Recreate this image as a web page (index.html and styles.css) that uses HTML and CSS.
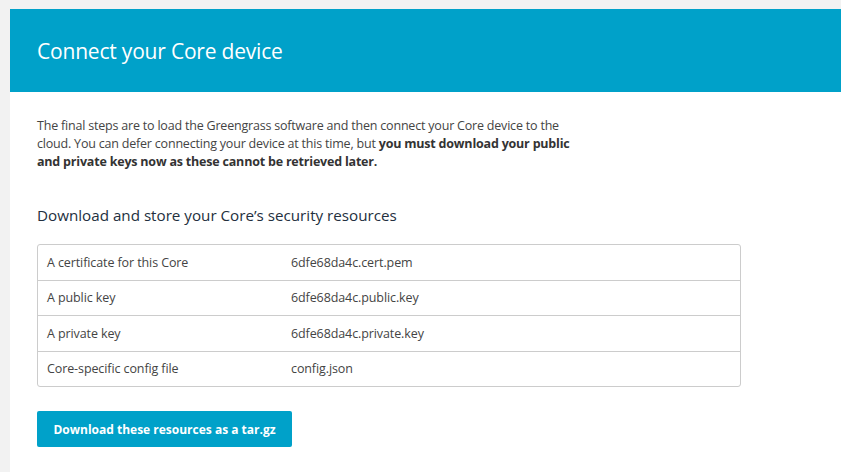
FILE: index.html
```html
<!DOCTYPE html>
<html>
<head>
<meta charset="utf-8">
<link rel="stylesheet" href="styles.css">
</head>
<body>
<div class="panel">
  <header class="hero"><h1>Connect your Core device</h1></header>
  <main class="content">
    <p class="intro">The final steps are to load the Greengrass software and then connect your Core device to the cloud. You can defer connecting your device at this time, but <b>you must download your public and private keys now as these cannot be retrieved later.</b></p>
    <h2>Download and store your Core’s security resources</h2>
    <div class="table">
      <div class="row"><span class="label">A certificate for this Core</span><span class="value">6dfe68da4c.cert.pem</span></div>
      <div class="row"><span class="label">A public key</span><span class="value">6dfe68da4c.public.key</span></div>
      <div class="row"><span class="label">A private key</span><span class="value">6dfe68da4c.private.key</span></div>
      <div class="row"><span class="label">Core-specific config file</span><span class="value">config.json</span></div>
    </div>
    <button class="btn">Download these resources as a tar.gz</button>
  </main>
</div>
</body>
</html>
```
FILE: styles.css
```css
html, body { margin: 0; padding: 0; }
body {
  background: #f2f2f2;
  font-family: "Open Sans", "Noto Sans", sans-serif;
  color: #444;
  padding: 9px 0 0 10px;
  height: 472px;
  box-sizing: border-box;
  overflow: hidden;
}
.panel { background: #fff; height: 100%; }
.hero {
  background: #00a1c9;
  height: 83px;
  display: flex;
  align-items: center;
  padding-left: 27px;
}
.hero h1 {
  margin: 0;
  color: #fff;
  font-weight: 400;
  font-size: 21px;
  letter-spacing: -0.2px;
}
.content { padding: 25px 0 0 27px; }
.intro {
  margin: 0;
  width: 545px;
  font-size: 12.5px;
  line-height: 18px;
  letter-spacing: -0.2px;
}
.intro b { font-weight: 700; color: #333; }
h2 {
  margin: 34px 0 0;
  font-size: 15.2px;
  font-weight: 400;
  line-height: 20px;
  color: #232f3e;
}
.table {
  margin-top: 19px;
  width: 702px;
  border: 1px solid #ccc;
  border-radius: 3px;
}
.row {
  display: grid;
  grid-template-columns: 244px 1fr;
  height: 34.5px;
  align-items: center;
  padding-left: 9px;
  font-size: 12.5px;
  letter-spacing: -0.1px;
  border-top: 1px solid #ccc;
}
.row:first-child { border-top: none; }
.btn {
  margin-top: 24px;
  background: #00a1c9;
  color: #fff;
  border: none;
  border-radius: 2px;
  font-family: inherit;
  font-weight: 700;
  font-size: 12px;
  height: 36px;
  width: 255px;
  padding: 0;
}
```
